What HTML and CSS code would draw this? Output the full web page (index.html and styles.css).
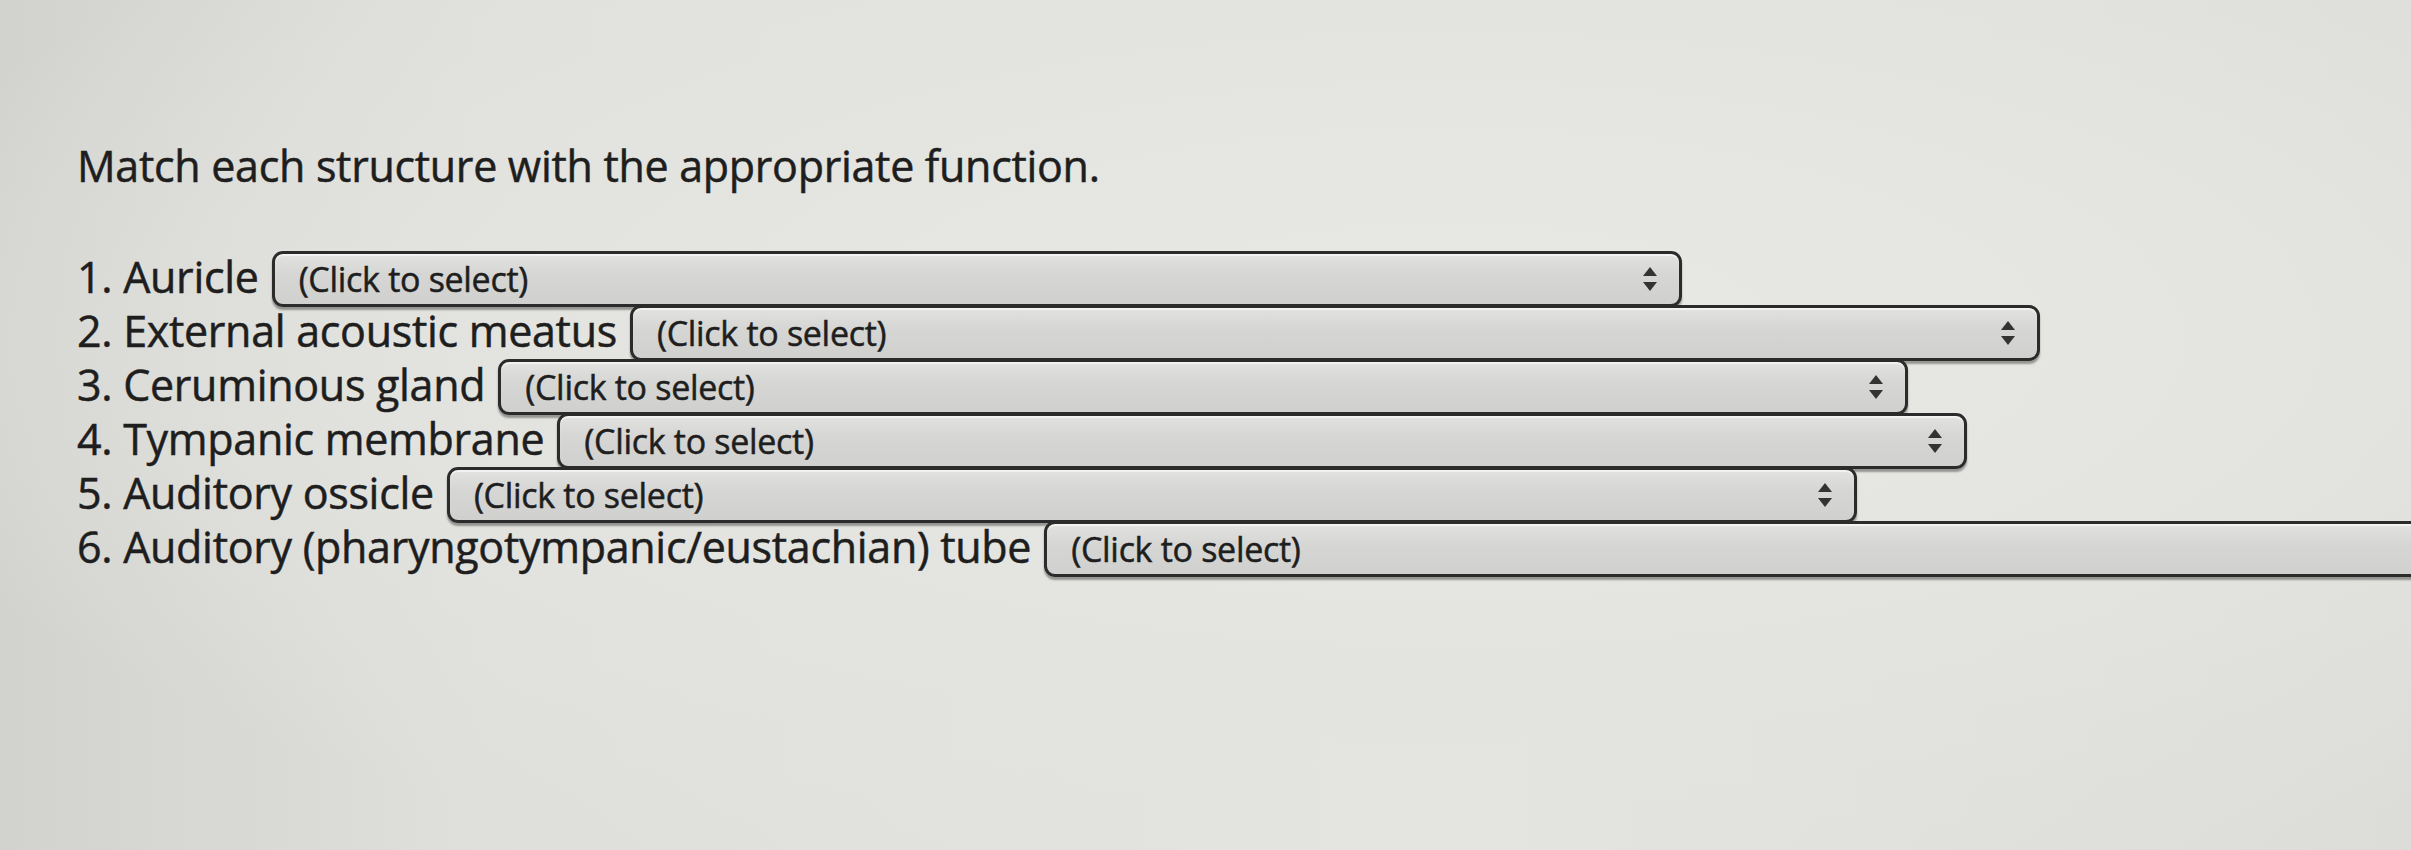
FILE: index.html
```html
<!DOCTYPE html>
<html lang="en">
<head>
  <meta charset="UTF-8" />
  <meta name="viewport" content="width=device-width, initial-scale=1.0"/>
  <title>Matching</title>
  <link rel="stylesheet" href="styles.css">
</head>
<body>
  <div class="question">
    <p class="prompt">Match each structure with the appropriate function.</p>

    <!-- 6 Zeilen: Struktur + Auswahl -->
    <div class="rows">
      <div class="row">
        <span class="label">1. Auricle</span>
        <div class="select"><span>(Click to select)</span><i class="arrows"></i></div>
      </div>
      <div class="row">
        <span class="label">2. External acoustic meatus</span>
        <div class="select"><span>(Click to select)</span><i class="arrows"></i></div>
      </div>
      <div class="row">
        <span class="label">3. Ceruminous gland</span>
        <div class="select"><span>(Click to select)</span><i class="arrows"></i></div>
      </div>
      <div class="row">
        <span class="label">4. Tympanic membrane</span>
        <div class="select"><span>(Click to select)</span><i class="arrows"></i></div>
      </div>
      <div class="row">
        <span class="label">5. Auditory ossicle</span>
        <div class="select"><span>(Click to select)</span><i class="arrows"></i></div>
      </div>
      <div class="row">
        <span class="label">6. Auditory (pharyngotympanic/eustachian) tube</span>
        <div class="select"><span>(Click to select)</span><i class="arrows"></i></div>
      </div>
    </div>
  </div>
</body>
</html>
```

FILE: styles.css
```css
* {
  margin: 0;
  padding: 0;
  box-sizing: border-box;
}

html, body {
  height: 100%;
  overflow: hidden;
}

body {
  font-family: "Open Sans", Lato, sans-serif;
  color: #1e1e1e;
  -webkit-text-stroke: 0.5px #1e1e1e;
  background:
    radial-gradient(ellipse at 60% 40%, #e9e9e5 0%, #e3e3df 45%, rgba(220, 220, 216, 0) 80%),
    linear-gradient(90deg, #d2d2ce 0%, #dfdfdb 20%, #e4e4e0 60%, #dcdcd8 100%);
}

.question {
  padding: 140px 0 0 77px;
}

.prompt {
  font-size: 43px;
  line-height: 52px;
  margin-bottom: 60px;
  letter-spacing: -0.3px;
}

.rows {
  display: flex;
  flex-direction: column;
}

.row {
  display: flex;
  align-items: center;
  gap: 13px;
  height: 54px;
  white-space: nowrap;
}

.label {
  font-size: 43px;
  line-height: 1;
  letter-spacing: -0.3px;
  flex-shrink: 0;
  margin-top: -6px;
}

.select {
  position: relative;
  flex-shrink: 0;
  display: flex;
  align-items: center;
  width: 1410px;
  height: 56px;
  padding-left: 24px;
  border: 3px solid #2b2b2b;
  border-radius: 11px;
  background: linear-gradient(180deg, #e2e2e0 0%, #d6d6d4 40%, #d0d0ce 100%);
  box-shadow: 0 3px 2px rgba(0, 0, 0, 0.35), inset 0 2px 1px rgba(255, 255, 255, 0.6);
  font-size: 34px;
  letter-spacing: -0.3px;
}

/* Auf/Ab-Pfeile rechts */
.arrows {
  position: absolute;
  right: 22px;
  top: 50%;
  width: 14px;
  height: 24px;
  margin-top: -12px;
}

.arrows::before,
.arrows::after {
  content: "";
  position: absolute;
  left: 0;
  border-left: 7px solid transparent;
  border-right: 7px solid transparent;
}

.arrows::before {
  top: 0;
  border-bottom: 9px solid #333;
}

.arrows::after {
  bottom: 0;
  border-top: 9px solid #333;
}
```
